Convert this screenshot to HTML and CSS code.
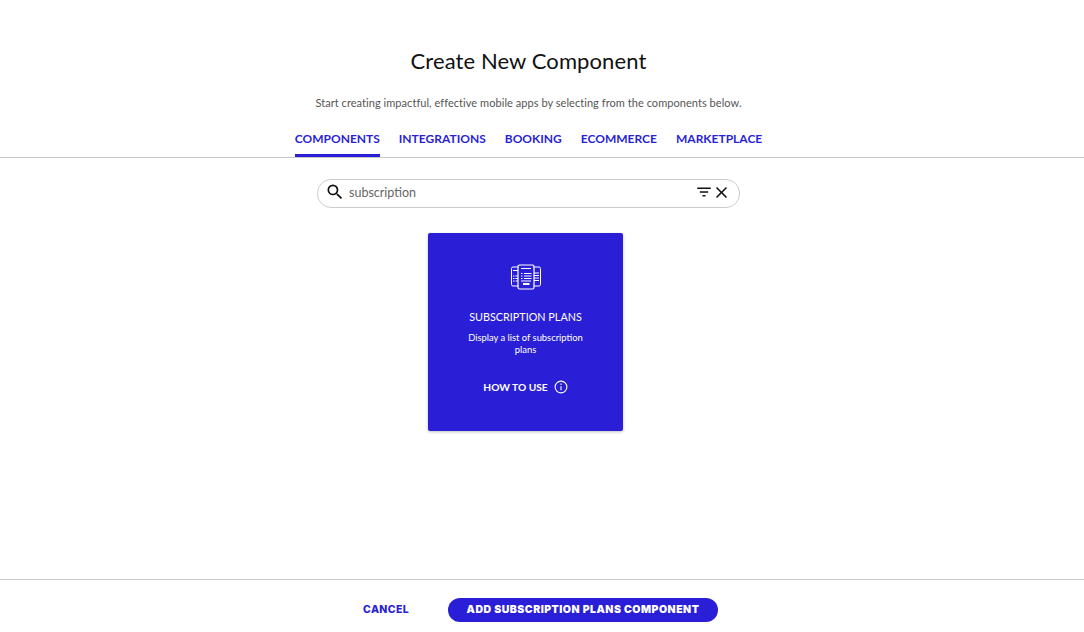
FILE: index.html
```html
<!DOCTYPE html>
<html lang="en">

<head>
  <meta charset="UTF-8">
  <meta name="viewport" content="width=device-width, initial-scale=1.0">
  <title>Create New Component</title>
  <link rel="stylesheet" href="styles.css">
</head>

<body>
  <div class="page">
    <div class="header">
      <h1 class="title">Create New Component</h1>
      <p class="subtitle">Start creating impactful, effective mobile apps by selecting from the components below.</p>
      <div class="tabs">
        <div class="tab active">COMPONENTS</div>
        <div class="tab">INTEGRATIONS</div>
        <div class="tab">BOOKING</div>
        <div class="tab">ECOMMERCE</div>
        <div class="tab">MARKETPLACE</div>
      </div>
    </div>

    <div class="content">
      <div class="search">
        <svg class="icon-search" width="20" height="20" viewBox="0 0 24 24">
          <path d="M15.5 14h-.79l-.28-.27A6.47 6.47 0 0 0 16 9.5 6.5 6.5 0 1 0 9.5 16c1.61 0 3.09-.59 4.23-1.57l.27.28v.79l5 4.99L20.49 19l-4.99-5zm-6 0C7.01 14 5 11.99 5 9.5S7.01 5 9.5 5 14 7.01 14 9.5 11.99 14 9.5 14z"/>
        </svg>
        <span class="search-text">subscription</span>
        <svg class="icon-filter" width="18" height="18" viewBox="0 0 24 24">
          <path d="M3 6h18v2H3zM6.5 11h11v2h-11zM10 16h4v2h-4z"/>
        </svg>
        <svg class="icon-close" width="19" height="19" viewBox="0 0 24 24">
          <path d="M19 6.41 17.59 5 12 10.59 6.41 5 5 6.41 10.59 12 5 17.59 6.41 19 12 13.41 17.59 19 19 17.59 13.41 12z"/>
        </svg>
      </div>

      <div class="card">
        <svg class="card-icon" width="32" height="26" viewBox="0 0 32 26" fill="none" stroke="#fff" stroke-width="1">
          <path d="M8.5 3H3a1.5 1.5 0 0 0-1.500 1.500v16A1.500 1.500 0 0 0 3 22h5.500"/>
          <path d="M23.500 3H29a1.500 1.500 0 0 1 1.500 1.500v16A1.500 1.500 0 0 1 29 22h-5.500"/>
          <rect x="8" y="1" width="16" height="24" rx="1.500" stroke-width="1.200"/>
          <path d="M11 4.500h10M11 9.500h1.500M14 9.500h7.500M11 12h1.500M14 12h7.500M11 14.500h1.500M14 14.500h7.500M11 17h10"/>
          <path d="M13 20h6.500" stroke-width="2"/>
          <path d="M3 6.500h5M3 12h1.500M5.500 12H8M3 14.500h1.500M5.500 14.500H8M3 17h1.500M5.500 17H8M24 9h5M24 11.500h5M24 14h5M24 16.500h5"/>
        </svg>
        <div class="card-title">SUBSCRIPTION PLANS</div>
        <div class="card-desc">Display a list of subscription plans</div>
        <div class="card-link">
          <span>HOW TO USE</span>
          <svg width="14" height="14" viewBox="0 0 14 14" fill="none" stroke="#fff" stroke-width="1.100">
            <circle cx="7" cy="7" r="5.900"/>
            <path d="M7 6.200v4M7 3.600v1.300"/>
          </svg>
        </div>
      </div>
    </div>

    <div class="footer">
      <div class="cancel">CANCEL</div>
      <div class="add-btn">ADD SUBSCRIPTION PLANS COMPONENT</div>
    </div>
  </div>
</body>
</html>
```

FILE: styles.css
```css
* {
  box-sizing: border-box;
}
html, body {
  margin: 0;
  height: 100%;
}
body {
  font-family: "Lato", "Open Sans", sans-serif;
  background: #fff;
  color: #111;
}
.page {
  height: 632px;
  display: flex;
  flex-direction: column;
  overflow: hidden;
}
.header {
  height: 158px;
  border-bottom: 1px solid #c8c8c8;
  padding: 46px 27px 0 0;
  display: flex;
  flex-direction: column;
  align-items: center;
}
.title {
  margin: 0;
  font-size: 22px;
  line-height: 30px;
  font-weight: 400;
  letter-spacing: 0.1px;
  color: #111;
}
.subtitle {
  margin: 19px 0 0;
  font-size: 11px;
  letter-spacing: 0.05px;
  line-height: 16px;
  color: #555;
}
.tabs {
  margin-top: 11px;
  display: flex;
  gap: 19px;
}
.tab {
  height: 35px;
  padding-top: 8px;
  font-size: 12px;
  line-height: 18px;
  font-weight: 700;
  color: #2a1fd6;
}
.tab.active {
  border-bottom: 3px solid #2a1fd6;
}
.content {
  flex: 1;
  padding: 21px 27px 0 0;
  display: flex;
  flex-direction: column;
  align-items: center;
}
.search {
  width: 423px;
  height: 29px;
  border: 1px solid #ccc;
  border-radius: 14px;
  padding: 0 8px 3px 6.5px;
  display: flex;
  align-items: center;
}
.icon-search {
  margin-right: 4.5px;
  fill: #111;
}
.search-text {
  flex: 1;
  font-size: 12.5px;
  color: #666;
}
.icon-filter, .icon-close {
  fill: #111;
}
.icon-close {
  margin-left: -1px;
}
.card {
  width: 195px;
  height: 198px;
  margin: 25px 6px 0 0;
  background: #2a1fd6;
  border-radius: 2px;
  box-shadow: 0 1px 3px rgba(0, 0, 0, 0.25);
  color: #fff;
  padding: 31px 30px 0;
  display: flex;
  flex-direction: column;
  align-items: center;
  text-align: center;
}
.card-icon {
  display: block;
}
.card-title {
  margin-top: 19px;
  font-size: 10.8px;
  line-height: 16px;
  white-space: nowrap;
}
.card-desc {
  margin-top: 7px;
  font-size: 9.4px;
  line-height: 12px;
}
.card-link {
  margin-top: 24px;
  display: flex;
  align-items: center;
  gap: 6px;
  font-size: 10.2px;
  font-weight: 700;
  line-height: 14px;
}
.footer {
  height: 53px;
  border-top: 1px solid #c8c8c8;
  padding: 18px 0 0 363px;
  display: flex;
  align-items: flex-start;
}
.cancel {
  width: 85px;
  font-family: "Inter", sans-serif;
  font-size: 10.5px;
  letter-spacing: 0.4px;
  font-weight: 800;
  line-height: 24px;
  color: #2a1fd6;
}
.add-btn {
  width: 270px;
  height: 24px;
  border-radius: 12px;
  background: #2a1fd6;
  color: #fff;
  text-align: center;
  font-family: "Inter", sans-serif;
  font-size: 10.5px;
  letter-spacing: 0.5px;
  font-weight: 900;
  line-height: 24px;
}
```
